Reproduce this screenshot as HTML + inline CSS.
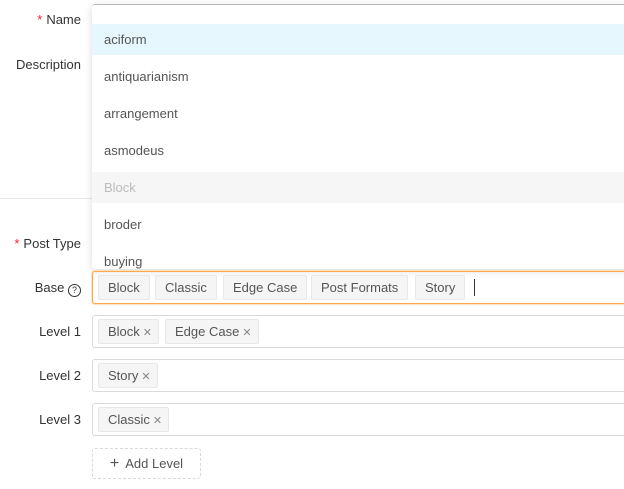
<!DOCTYPE html>
<html><head><style>
body{margin:0;width:624px;height:489px;overflow:hidden;background:#fff;font-family:"Liberation Sans",sans-serif;font-size:13px;color:#333;position:relative}
.a{position:absolute}
.lbl{position:absolute;right:543px;color:#333;white-space:nowrap}
.req{color:#f5222d;margin-right:4px}
.inp{position:absolute;left:92px;width:540px;border:1px solid #d9d9d9;border-radius:3px;box-sizing:border-box;height:33px}
.tag{position:absolute;top:3px;height:25px;line-height:24px;background:#f5f5f5;border:1px solid #e8e8e8;border-radius:2px;box-sizing:border-box;padding:0 9px;color:#555;white-space:nowrap}
.tag.x{padding:0 6px 0 9px}
.tag i{font-style:normal;color:#888;margin-left:3px;font-size:11px}
.dd{position:absolute;left:92px;top:4px;width:540px;height:264px;background:#fff;box-shadow:0 2px 8px rgba(0,0,0,.15);border-radius:3px;overflow:hidden;border-top:1px solid #bbb}
.it{position:absolute;left:0;width:100%;height:31px;line-height:31px;padding-left:12px;color:#555}
</style></head><body>
<div class="lbl" style="top:12px"><span class="req">*</span>Name</div>
<div class="lbl" style="top:57px">Description</div>
<div class="a" style="left:0;top:198px;width:92px;height:1px;background:#e8e8e8"></div>
<div class="lbl" style="top:236px"><span class="req">*</span>Post Type</div>
<div class="dd">
<div class="it" style="top:19px;background:#e6f7fd">aciform</div>
<div class="it" style="top:56px">antiquarianism</div>
<div class="it" style="top:93px">arrangement</div>
<div class="it" style="top:130px">asmodeus</div>
<div class="it" style="top:167px;background:#f6f6f6;color:#bbb">Block</div>
<div class="it" style="top:204px">broder</div>
<div class="it" style="top:241px">buying</div>
</div>
<div class="lbl" style="top:280px">Base <span style="display:inline-block;width:11px;height:11px;border:1px solid #333;border-radius:50%;font-size:9px;line-height:11px;text-align:center;vertical-align:-1px">?</span></div>
<div class="inp" style="top:271px;border-color:#ffa94d;box-shadow:0 0 0 1px #ffe0c0">
<div class="tag" style="left:5px">Block</div>
<div class="tag" style="left:62px">Classic</div>
<div class="tag" style="left:130px">Edge Case</div>
<div class="tag" style="left:218px">Post Formats</div>
<div class="tag" style="left:322px">Story</div>
<div class="a" style="left:381px;top:7px;width:1px;height:17px;background:#333"></div>
</div>
<div class="lbl" style="top:324px">Level 1</div>
<div class="inp" style="top:315px">
<div class="tag x" style="left:5px">Block<i>✕</i></div>
<div class="tag x" style="left:72px">Edge Case<i>✕</i></div>
</div>
<div class="lbl" style="top:368px">Level 2</div>
<div class="inp" style="top:359px">
<div class="tag x" style="left:5px">Story<i>✕</i></div>
</div>
<div class="lbl" style="top:412px">Level 3</div>
<div class="inp" style="top:403px">
<div class="tag x" style="left:5px">Classic<i>✕</i></div>
</div>
<div class="a" style="left:92px;top:448px;width:109px;height:31px;border:1px dashed #d9d9d9;border-radius:3px;box-sizing:border-box;line-height:29px;text-align:center;color:#555"><span style="font-size:16px;margin-right:6px">+</span>Add Level</div>
</body></html>
